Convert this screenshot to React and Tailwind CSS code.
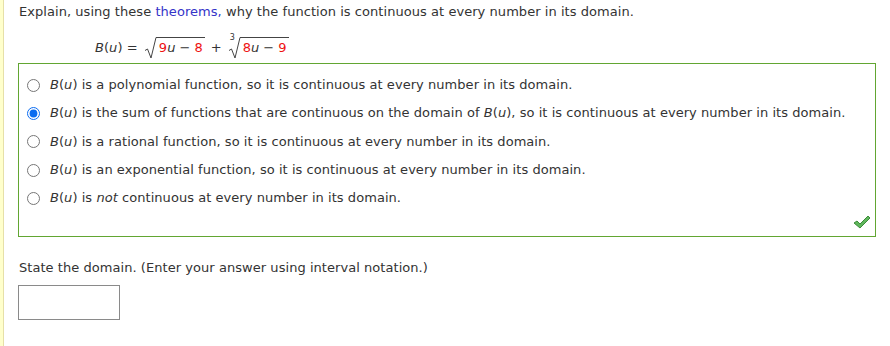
import React from "react";

const options = [
  { id: 1, text: (<>is a polynomial function, so it is continuous at every number in its domain.</>) },
  { id: 2, text: (<>is the sum of functions that are continuous on the domain of <i>B</i>(<i>u</i>), so it is continuous at every number in its domain.</>), checked: true },
  { id: 3, text: (<>is a rational function, so it is continuous at every number in its domain.</>) },
  { id: 4, text: (<>is an exponential function, so it is continuous at every number in its domain.</>) },
  { id: 5, text: (<>is <i>not</i> continuous at every number in its domain.</>) },
];

const Red = ({ children }) => <span className="text-[#ee1111]">{children}</span>;

// radical sign drawn as svg, overline is the border of the radicand
const Root = ({ index, className, children }) => (
  <div className={`relative flex items-stretch ${className || ""}`}>
    {index && (
      <span className="absolute top-[-3px] left-[2px] text-[8px] leading-none">{index}</span>
    )}
    <svg width="13" height="22" viewBox="0 0 13 22" className="shrink-0">
      <path d="M1 13.5 L3.5 12 L7 21 L12 0.5 L13 0.5" stroke="#444" strokeWidth="1" fill="none" />
    </svg>
    <span className="border-t border-[#444] pt-[2px] pb-[3px] leading-[16px] pl-[2px] pr-[2px]">{children}</span>
  </div>
);

const Formula = () => (
  <div className="flex items-center h-[22px] ml-[77px] mt-[17px]">
    <span className="leading-[16px]"><i>B</i>(<i>u</i>) =&nbsp;</span>
    <Root className="ml-[2px]">
      <Red>9</Red><i>u</i><span className="mx-[4px]">−</span><Red>8</Red>
    </Root>
    <span className="leading-[16px] mx-[6px]">+</span>
    <Root index="3">
      <Red>8</Red><i>u</i><span className="mx-[4px]">−</span><Red>9</Red>
    </Root>
  </div>
);

const App = () => {
  return (
    <div className="flex w-[890px] h-[346px] bg-white text-[13px] tracking-[0.05px] text-[#333] font-['DejaVu_Sans',Verdana,sans-serif]">
      {/* left strip */}
      <div className="w-[4px] bg-[#ffffcc] border-r border-[#e6e0a8]"></div>

      <div className="flex-1 pl-[14px] pr-[14px]">
        <p className="pt-[4px] leading-[16px] pl-[1px]">
          Explain, using these <span className="text-[#3434c8]">theorems,</span> why the function is continuous at every number in its domain.
        </p>

        <Formula />

        {/* choices */}
        <div className="mt-[4px] w-[858px] h-[174px] border border-[#62a632] flex flex-col pt-[7px]">
          {options.map((opt) => (
            <label key={opt.id} className="flex items-center h-[28.3px] pl-[8px]">
              <input type="radio" name="q1" checked={!!opt.checked} readOnly className="w-[13px] h-[13px] m-0 accent-[#0b6cf0]" />
              <span className="ml-[10px] leading-[16px]">
                <i>B</i>(<i>u</i>) {opt.text}
              </span>
            </label>
          ))}
          <div className="flex justify-end mt-auto pb-[7px] pr-[4px]">
            <svg width="18" height="14" viewBox="0 0 18 14">
              <path d="M1 8 L4 6 L7 9 L15 1 L17 3 L7 13 Z" fill="#5fb65c" stroke="#3d8d3a" strokeWidth="1" strokeLinejoin="round" />
            </svg>
          </div>
        </div>

        <p className="mt-[23px] leading-[16px] pl-[1px]">
          State the domain. (Enter your answer using interval notation.)
        </p>

        <input type="text" className="mt-[9px] block w-[102px] h-[35px] border border-[#8a8a8a] outline-none" />
      </div>
    </div>
  );
};

export default App;
